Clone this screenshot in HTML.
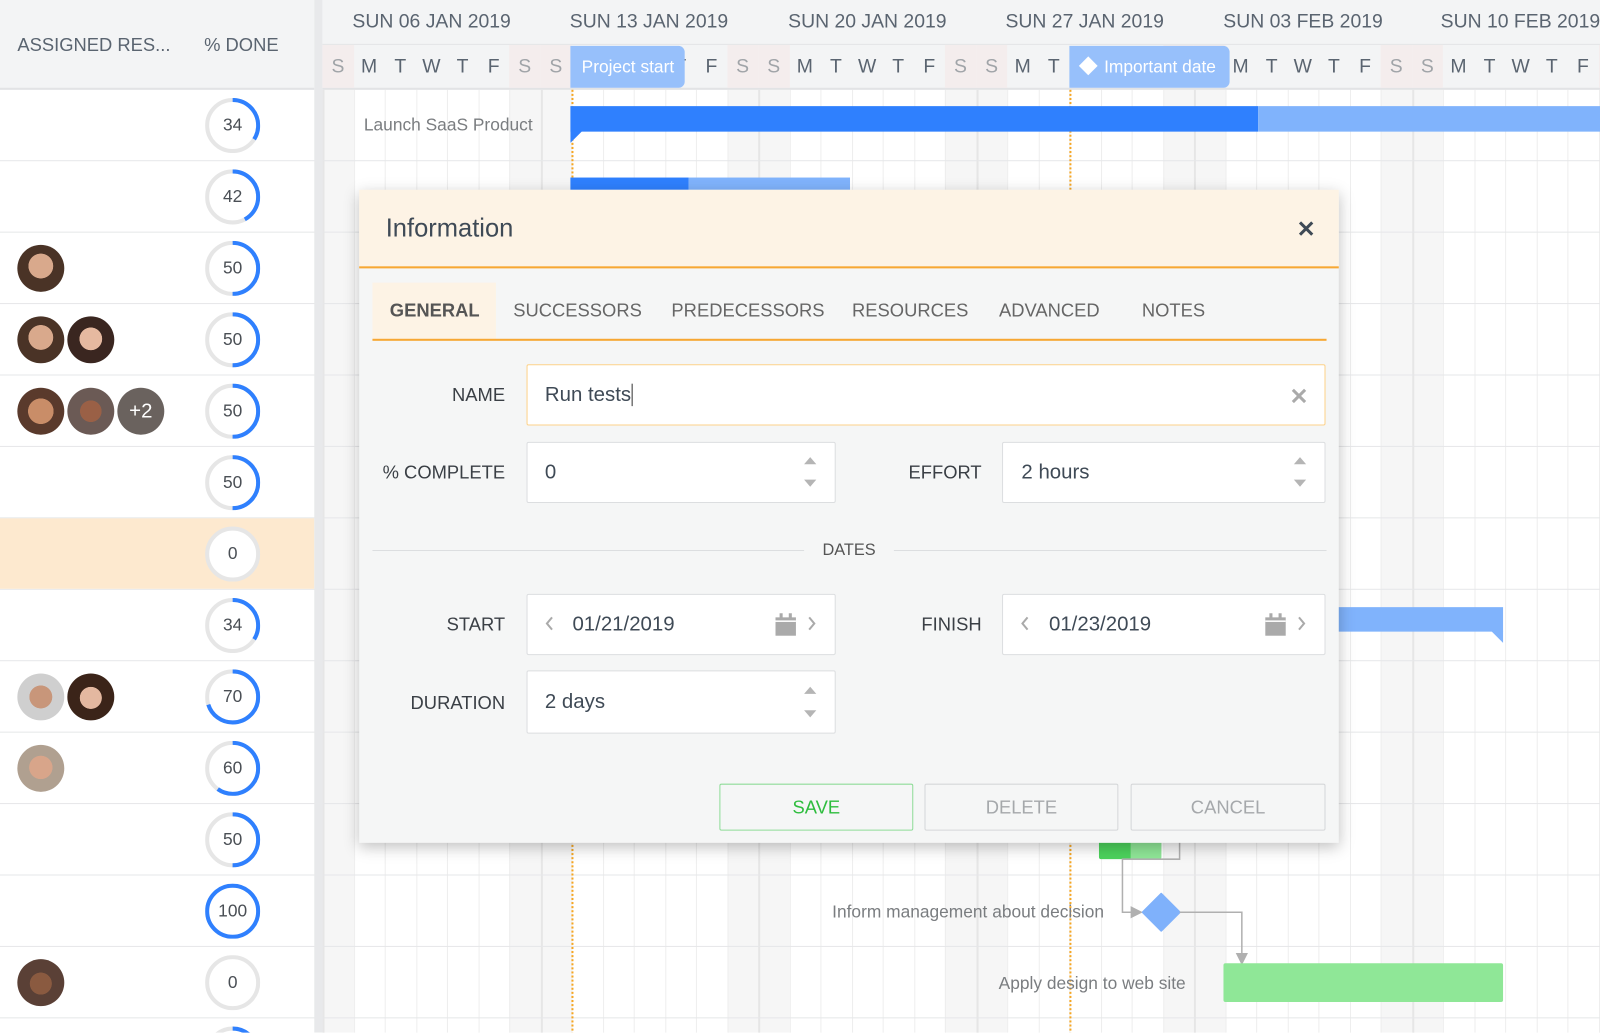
<!DOCTYPE html>
<html><head><meta charset="utf-8">
<style>
*{box-sizing:border-box;margin:0;padding:0}
html,body{width:1600px;height:1033px;overflow:hidden;background:#fff;font-family:"Liberation Sans",sans-serif}
#w{position:absolute;left:0;top:0;width:1568px;height:1012px;transform:scale(1.020408);transform-origin:0 0;overflow:hidden}
.a{position:absolute}
.lh{left:0;top:0;width:308px;height:88px;background:#f3f4f5;border-bottom:2px solid #e2e3e5;color:#5a6470;font-size:18px}
.split{left:308px;top:0;width:8px;height:1012px;background:#e8e9eb}
.wk{top:0;height:44px;background:#f3f4f5;border-bottom:1px solid #e2e3e5;left:316px;width:1252px}
.wk span{position:absolute;top:11px;font-size:19px;color:#5a6470;width:214px;text-align:center}
.days{left:316px;top:44px;height:44px;width:1300px;display:flex;background:#f3f4f5;border-bottom:2px solid #e2e3e5}
.days div{width:30.5px;flex:none;text-align:center;line-height:44px;font-size:19px;color:#5a6470}
.days .we{background:#f4eded;color:#a0a4a8}
.grid{left:316px;top:88px;width:1300px;height:930px;display:flex}
.grid div{width:30.5px;flex:none;border-left:1px solid #eeeeee;height:100%}
.grid .we{background:#f6f6f6}
.grid .ws{border-left:2px solid #e6e6e6}
.row{left:0;width:1568px;height:1px;background:#e6e7e9}
.lrow{left:0;width:308px;height:70px}
.ring{left:201px;width:54px;height:54px}
.ring svg{position:absolute;left:0;top:0}
.ring b{position:absolute;left:0;top:0;width:54px;line-height:54px;text-align:center;font-weight:normal;font-size:17px;color:#4a4f55}
.av{width:46px;height:46px;border-radius:50%}
.tl{font-size:17px;color:#7a7d80;text-align:right}
.dlg{left:352px;top:186px;width:960px;height:640px;background:#f5f6f6;box-shadow:0 4px 14px rgba(0,0,0,.25)}
.hd{left:0;top:0;width:960px;height:77px;background:#fdf3e5;border-bottom:2px solid #f7a733}
.lab{font-size:18px;color:#3a3f45;text-align:right;width:200px}
.inp{background:#fff;border:1px solid #dcdee0;border-radius:2px}
.val{font-size:20px;color:#3f4a56}
.sp{width:0;height:0;border-left:6px solid transparent;border-right:6px solid transparent}
.btn{top:582px;width:190px;height:46px;border:1px solid #d5d7d9;border-radius:2px;text-align:center;line-height:44px;font-size:18px;color:#a5a8ab;background:#f5f6f6}
</style></head><body><div id="w">

<!-- grid -->
<div class="a grid">
<div class="we ws"></div><div></div><div></div><div></div><div></div><div></div><div class="we"></div>
<div class="we ws"></div><div></div><div></div><div></div><div></div><div></div><div class="we"></div>
<div class="we ws"></div><div></div><div></div><div></div><div></div><div></div><div class="we"></div>
<div class="we ws"></div><div></div><div></div><div></div><div></div><div></div><div class="we"></div>
<div class="we ws"></div><div></div><div></div><div></div><div></div><div></div><div class="we"></div>
<div class="we ws"></div><div></div><div></div><div></div><div></div><div></div><div class="we"></div>
</div>

<!-- row lines -->
<div class="a row" style="top:157px"></div><div class="a row" style="top:227px"></div><div class="a row" style="top:297px"></div><div class="a row" style="top:367px"></div><div class="a row" style="top:437px"></div><div class="a row" style="top:507px"></div><div class="a row" style="top:577px"></div><div class="a row" style="top:647px"></div><div class="a row" style="top:717px"></div><div class="a row" style="top:787px"></div><div class="a row" style="top:857px"></div><div class="a row" style="top:927px"></div><div class="a row" style="top:997px"></div>

<div class="a" style="left:0;top:508px;width:308px;height:69px;background:#fde9cf"></div>

<!-- header -->
<div class="a lh"><span class="a" style="left:17px;top:34px">ASSIGNED RES...</span><span class="a" style="left:200px;top:34px">% DONE</span></div>
<div class="a split"></div>
<div class="a wk"><span style="left:0">SUN 06 JAN 2019</span><span style="left:213px">SUN 13 JAN 2019</span><span style="left:427px">SUN 20 JAN 2019</span><span style="left:640px">SUN 27 JAN 2019</span><span style="left:854px">SUN 03 FEB 2019</span><span style="left:1067px">SUN 10 FEB 2019</span></div>
<div class="a days">
<div class="we">S</div><div>M</div><div>T</div><div>W</div><div>T</div><div>F</div><div class="we">S</div>
<div class="we">S</div><div>M</div><div>T</div><div>W</div><div>T</div><div>F</div><div class="we">S</div>
<div class="we">S</div><div>M</div><div>T</div><div>W</div><div>T</div><div>F</div><div class="we">S</div>
<div class="we">S</div><div>M</div><div>T</div><div>W</div><div>T</div><div>F</div><div class="we">S</div>
<div class="we">S</div><div>M</div><div>T</div><div>W</div><div>T</div><div>F</div><div class="we">S</div>
<div class="we">S</div><div>M</div><div>T</div><div>W</div><div>T</div><div>F</div><div class="we">S</div>
</div>
<div class="a" style="left:559px;top:45px;width:112px;height:41px;background:#97c0fb;border-radius:0 6px 6px 0;color:#fff;font-size:17px;line-height:41px;padding-left:11px">Project start</div>
<div class="a" style="left:1048px;top:45px;width:157px;height:41px;background:#97c0fb;border-radius:0 6px 6px 0;color:#fff;font-size:17px;line-height:41px;padding-left:34px">Important date</div>
<div class="a" style="left:1060px;top:58px;width:13px;height:13px;background:#fff;transform:rotate(45deg)"></div>

<!-- dashed lines -->
<div class="a" style="left:560px;top:88px;height:930px;border-left:2px dotted #f5a623"></div>
<div class="a" style="left:1048px;top:88px;height:930px;border-left:2px dotted #f5a623"></div>

<!-- bars -->
<div class="a tl" style="left:300px;top:113px;width:222px">Launch SaaS Product</div>
<div class="a" style="left:559px;top:104px;width:674px;height:25px;background:#2f80fe"></div>
<div class="a" style="left:1233px;top:104px;width:340px;height:25px;background:#80b3fc"></div>
<svg class="a" style="left:559px;top:128px" width="14" height="14"><polygon points="0,0 12,0 0,12" fill="#2f80fe"/></svg>
<div class="a" style="left:559px;top:174px;width:116px;height:14px;background:#2f80fe"></div>
<div class="a" style="left:675px;top:174px;width:158px;height:14px;background:#80b3fc"></div>
<div class="a" style="left:1300px;top:595px;width:173px;height:24px;background:#80b3fc"></div>
<svg class="a" style="left:1461px;top:618px" width="13" height="13"><polygon points="0,0 12,0 12,12" fill="#80b3fc"/></svg>
<div class="a" style="left:1077px;top:820px;width:61px;height:22px;background:#4cd25c;border-radius:2px"></div>
<div class="a" style="left:1108px;top:820px;width:30px;height:22px;background:#8fe697"></div>
<svg class="a" style="left:1090px;top:820px" width="140" height="130"><path d="M66 0V22H10V74H22" fill="none" stroke="#b0b0b0" stroke-width="1.5"/><polygon points="18,68 30,74 18,80" fill="#b0b0b0"/><polygon points="48,56 66,74 48,92 30,74" fill="#7fb1fb" stroke="#7fb1fb" stroke-width="2" stroke-linejoin="round"/><path d="M66 74H127V120" fill="none" stroke="#b0b0b0" stroke-width="1.5"/><polygon points="121,114 133,114 127,126" fill="#b0b0b0"/></svg>
<div class="a tl" style="left:700px;top:884px;width:382px">Inform management about decision</div>
<div class="a tl" style="left:900px;top:954px;width:262px">Apply design to web site</div>
<div class="a" style="left:1199px;top:944px;width:274px;height:38px;background:#8fe797;border-radius:2px"></div>

<!-- rings -->
<div class="a ring" style="top:96px"><svg width="54" height="54"><circle cx="27" cy="27" r="25" fill="#fff" stroke="#e6e6e6" stroke-width="4"/><circle cx="27" cy="27" r="25" fill="none" stroke="#2f80fe" stroke-width="4" stroke-dasharray="53.4 200" transform="rotate(-90 27 27)"/></svg><b>34</b></div>
<div class="a ring" style="top:166px"><svg width="54" height="54"><circle cx="27" cy="27" r="25" fill="#fff" stroke="#e6e6e6" stroke-width="4"/><circle cx="27" cy="27" r="25" fill="none" stroke="#2f80fe" stroke-width="4" stroke-dasharray="66 200" transform="rotate(-90 27 27)"/></svg><b>42</b></div>
<div class="a ring" style="top:236px"><svg width="54" height="54"><circle cx="27" cy="27" r="25" fill="#fff" stroke="#e6e6e6" stroke-width="4"/><circle cx="27" cy="27" r="25" fill="none" stroke="#2f80fe" stroke-width="4" stroke-dasharray="78.5 200" transform="rotate(-90 27 27)"/></svg><b>50</b></div>
<div class="a ring" style="top:306px"><svg width="54" height="54"><circle cx="27" cy="27" r="25" fill="#fff" stroke="#e6e6e6" stroke-width="4"/><circle cx="27" cy="27" r="25" fill="none" stroke="#2f80fe" stroke-width="4" stroke-dasharray="78.5 200" transform="rotate(-90 27 27)"/></svg><b>50</b></div>
<div class="a ring" style="top:376px"><svg width="54" height="54"><circle cx="27" cy="27" r="25" fill="#fff" stroke="#e6e6e6" stroke-width="4"/><circle cx="27" cy="27" r="25" fill="none" stroke="#2f80fe" stroke-width="4" stroke-dasharray="78.5 200" transform="rotate(-90 27 27)"/></svg><b>50</b></div>
<div class="a ring" style="top:446px"><svg width="54" height="54"><circle cx="27" cy="27" r="25" fill="#fff" stroke="#e6e6e6" stroke-width="4"/><circle cx="27" cy="27" r="25" fill="none" stroke="#2f80fe" stroke-width="4" stroke-dasharray="78.5 200" transform="rotate(-90 27 27)"/></svg><b>50</b></div>
<div class="a ring" style="top:516px"><svg width="54" height="54"><circle cx="27" cy="27" r="25" fill="#fff" stroke="#e6e6e6" stroke-width="4"/></svg><b>0</b></div>
<div class="a ring" style="top:586px"><svg width="54" height="54"><circle cx="27" cy="27" r="25" fill="#fff" stroke="#e6e6e6" stroke-width="4"/><circle cx="27" cy="27" r="25" fill="none" stroke="#2f80fe" stroke-width="4" stroke-dasharray="53.4 200" transform="rotate(-90 27 27)"/></svg><b>34</b></div>
<div class="a ring" style="top:656px"><svg width="54" height="54"><circle cx="27" cy="27" r="25" fill="#fff" stroke="#e6e6e6" stroke-width="4"/><circle cx="27" cy="27" r="25" fill="none" stroke="#2f80fe" stroke-width="4" stroke-dasharray="110 200" transform="rotate(-90 27 27)"/></svg><b>70</b></div>
<div class="a ring" style="top:726px"><svg width="54" height="54"><circle cx="27" cy="27" r="25" fill="#fff" stroke="#e6e6e6" stroke-width="4"/><circle cx="27" cy="27" r="25" fill="none" stroke="#2f80fe" stroke-width="4" stroke-dasharray="94 200" transform="rotate(-90 27 27)"/></svg><b>60</b></div>
<div class="a ring" style="top:796px"><svg width="54" height="54"><circle cx="27" cy="27" r="25" fill="#fff" stroke="#e6e6e6" stroke-width="4"/><circle cx="27" cy="27" r="25" fill="none" stroke="#2f80fe" stroke-width="4" stroke-dasharray="78.5 200" transform="rotate(-90 27 27)"/></svg><b>50</b></div>
<div class="a ring" style="top:866px"><svg width="54" height="54"><circle cx="27" cy="27" r="25" fill="#fff" stroke="#2f80fe" stroke-width="4"/></svg><b>100</b></div>
<div class="a ring" style="top:936px"><svg width="54" height="54"><circle cx="27" cy="27" r="25" fill="#fff" stroke="#e6e6e6" stroke-width="4"/></svg><b>0</b></div>
<div class="a ring" style="top:1006px"><svg width="54" height="54"><circle cx="27" cy="27" r="25" fill="#fff" stroke="#e6e6e6" stroke-width="4"/><circle cx="27" cy="27" r="25" fill="none" stroke="#2f80fe" stroke-width="4" stroke-dasharray="40 200" transform="rotate(-90 27 27)"/></svg></div>

<!-- avatars -->
<div class="a av" style="left:17px;top:240px;background:radial-gradient(circle at 50% 45%,#d9a98c 0 35%,#4a3326 36%)"></div>
<div class="a av" style="left:17px;top:310px;background:radial-gradient(circle at 50% 45%,#d9a98c 0 35%,#4a3326 36%)"></div>
<div class="a av" style="left:66px;top:310px;background:radial-gradient(circle at 50% 48%,#e6b9a0 0 33%,#3a2620 34%)"></div>
<div class="a av" style="left:17px;top:380px;background:radial-gradient(circle at 50% 50%,#c98d68 0 38%,#5a3a2c 39%)"></div>
<div class="a av" style="left:66px;top:380px;background:radial-gradient(circle at 50% 50%,#9a6046 0 32%,#6b5a55 33%)"></div>
<div class="a av" style="left:115px;top:380px;background:#6a625e;color:#fff;font-size:20px;text-align:center;line-height:46px">+2</div>
<div class="a av" style="left:17px;top:660px;background:radial-gradient(circle at 50% 50%,#c8967a 0 34%,#cfcfcf 35%)"></div>
<div class="a av" style="left:66px;top:660px;background:radial-gradient(circle at 50% 52%,#e4b8a0 0 32%,#3b2419 33%)"></div>
<div class="a av" style="left:17px;top:730px;background:radial-gradient(circle at 50% 48%,#d8a58a 0 34%,#b0a090 35%)"></div>
<div class="a av" style="left:17px;top:940px;background:radial-gradient(circle at 50% 52%,#8a5a40 0 32%,#5a4036 33%)"></div>

<!-- dialog -->
<div class="a dlg">
 <div class="a hd"><span class="a" style="left:26px;top:24px;font-size:25px;color:#3f4a56">Information</span>
  <svg class="a" style="left:920px;top:30px" width="16" height="16"><path d="M2 2L14 14M14 2L2 14" stroke="#3f4a56" stroke-width="3"/></svg></div>
 <div class="a" style="left:13px;top:91px;width:121px;height:56px;background:#fdf3e5"></div>
 <div class="a" style="left:13px;top:146px;width:935px;height:2px;background:#f7a733"></div>
 <div class="a" style="left:30px;top:108px;font-size:18px;color:#555;font-weight:bold">GENERAL</div>
 <div class="a" style="left:151px;top:108px;font-size:18px;color:#666">SUCCESSORS</div>
 <div class="a" style="left:306px;top:108px;font-size:18px;color:#666">PREDECESSORS</div>
 <div class="a" style="left:483px;top:108px;font-size:18px;color:#666">RESOURCES</div>
 <div class="a" style="left:627px;top:108px;font-size:18px;color:#666">ADVANCED</div>
 <div class="a" style="left:767px;top:108px;font-size:18px;color:#666">NOTES</div>

 <div class="a lab" style="left:-57px;top:191px">NAME</div>
 <div class="a inp" style="left:164px;top:171px;width:783px;height:60px;border-color:#fdd28a"><span class="a val" style="left:17px;top:18px">Run tests<span style="border-left:1.5px solid #333;margin-left:1px"></span></span>
  <svg class="a" style="left:748px;top:22px" width="16" height="16"><path d="M2 2L14 14M14 2L2 14" stroke="#aaa" stroke-width="3"/></svg></div>

 <div class="a lab" style="left:-57px;top:267px">% COMPLETE</div>
 <div class="a inp" style="left:164px;top:247px;width:303px;height:60px"><span class="a val" style="left:17px;top:18px">0</span>
  <div class="a sp" style="left:271px;top:14px;border-bottom:7px solid #b5b5b5"></div><div class="a sp" style="left:271px;top:36px;border-top:7px solid #b5b5b5"></div></div>
 <div class="a lab" style="left:410px;top:267px">EFFORT</div>
 <div class="a inp" style="left:630px;top:247px;width:317px;height:60px"><span class="a val" style="left:18px;top:18px">2 hours</span>
  <div class="a sp" style="left:285px;top:14px;border-bottom:7px solid #b5b5b5"></div><div class="a sp" style="left:285px;top:36px;border-top:7px solid #b5b5b5"></div></div>

 <div class="a" style="left:13px;top:353px;width:423px;height:1px;background:#dcdee0"></div>
 <div class="a" style="left:454px;top:345px;font-size:16px;color:#555">DATES</div>
 <div class="a" style="left:524px;top:353px;width:424px;height:1px;background:#dcdee0"></div>

 <div class="a lab" style="left:-57px;top:416px">START</div>
 <div class="a inp" style="left:164px;top:396px;width:303px;height:60px">
  <svg class="a" style="left:16px;top:20px" width="10" height="16"><path d="M8 2L3 8L8 14" fill="none" stroke="#aaa" stroke-width="2"/></svg>
  <span class="a val" style="left:44px;top:18px">01/21/2019</span>
  <svg class="a" style="left:242px;top:17px" width="22" height="24"><rect x="1" y="5" width="20" height="18" fill="#aaa"/><rect x="5" y="1" width="3" height="6" fill="#aaa"/><rect x="14" y="1" width="3" height="6" fill="#aaa"/><rect x="1" y="8" width="20" height="1.5" fill="#fff"/></svg>
  <svg class="a" style="left:274px;top:20px" width="10" height="16"><path d="M2 2L7 8L2 14" fill="none" stroke="#aaa" stroke-width="2"/></svg></div>
 <div class="a lab" style="left:410px;top:416px">FINISH</div>
 <div class="a inp" style="left:630px;top:396px;width:317px;height:60px">
  <svg class="a" style="left:16px;top:20px" width="10" height="16"><path d="M8 2L3 8L8 14" fill="none" stroke="#aaa" stroke-width="2"/></svg>
  <span class="a val" style="left:45px;top:18px">01/23/2019</span>
  <svg class="a" style="left:256px;top:17px" width="22" height="24"><rect x="1" y="5" width="20" height="18" fill="#aaa"/><rect x="5" y="1" width="3" height="6" fill="#aaa"/><rect x="14" y="1" width="3" height="6" fill="#aaa"/><rect x="1" y="8" width="20" height="1.5" fill="#fff"/></svg>
  <svg class="a" style="left:288px;top:20px" width="10" height="16"><path d="M2 2L7 8L2 14" fill="none" stroke="#aaa" stroke-width="2"/></svg></div>

 <div class="a lab" style="left:-57px;top:493px">DURATION</div>
 <div class="a inp" style="left:164px;top:471px;width:303px;height:62px"><span class="a val" style="left:17px;top:19px">2 days</span>
  <div class="a sp" style="left:271px;top:15px;border-bottom:7px solid #b5b5b5"></div><div class="a sp" style="left:271px;top:38px;border-top:7px solid #b5b5b5"></div></div>

 <div class="a btn" style="left:353px;border-color:#8fdc98;color:#2ebd3e">SAVE</div>
 <div class="a btn" style="left:554px">DELETE</div>
 <div class="a btn" style="left:756px;width:191px">CANCEL</div>
</div>

</div></body></html>
